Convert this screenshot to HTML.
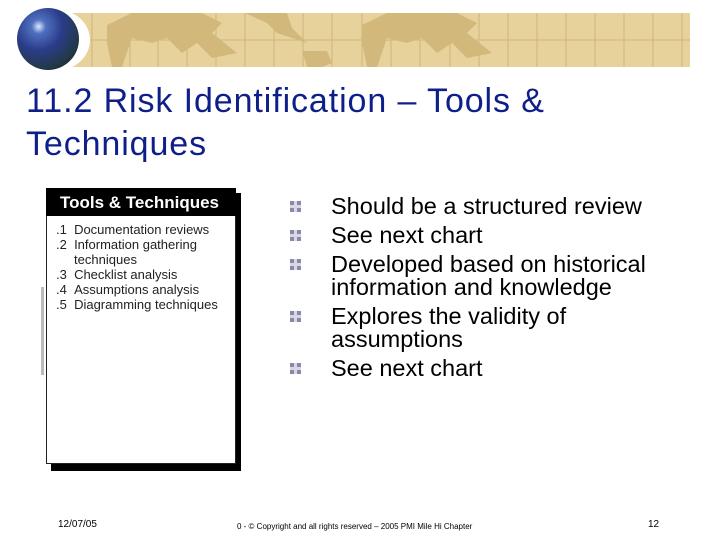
<!DOCTYPE html>
<html><head><style>
body{margin:0;width:720px;height:540px;background:#fff;position:relative;overflow:hidden;font-family:"Liberation Sans",sans-serif}
.a{position:absolute}
.bul{position:absolute;left:331px;font-size:23.5px;color:#000;line-height:23px;white-space:nowrap}
.ic{position:absolute;left:290px;width:11px;height:11px;background:#8a88a8}
.ic:before{content:"";position:absolute;left:4px;top:0;width:3px;height:11px;background:#d8d8e4}
.ic:after{content:"";position:absolute;left:0;top:4px;width:11px;height:3px;background:#d8d8e4}
</style></head><body>
<div class="a" style="left:62px;top:13px;width:628px;height:54px;background:#e6d29a;overflow:hidden">
<svg width="628" height="54">
<g stroke="#cfb77c" stroke-width="1">
<line x1="0" y1="27" x2="628" y2="27"/>
<path d="M30 0V54M68 0V54M96 0V54M125 0V54M154 0V54M183 0V54M212 0V54M241 0V54M270 0V54M300 0V54M329 0V54M358 0V54M388 0V54M417 0V54M446 0V54M475 0V54M504 0V54M533 0V54M562 0V54M591 0V54M620 0V54"/>
</g>
<g fill="#d3b87c">
<path d="M45 12 L70 0 L140 0 L160 10 L150 20 L175 40 L150 45 L135 30 L120 40 L105 25 L90 30 L70 25 L60 54 L50 54 L45 30Z"/>
<path d="M183 0 L225 0 L230 15 L245 30 L230 25 L215 20 L205 10Z"/>
<path d="M240 38 L265 38 L270 50 L260 54 L245 54Z"/>
<path d="M300 12 L325 0 L395 0 L415 10 L405 20 L430 40 L405 45 L390 30 L375 40 L360 25 L345 30 L325 25 L315 54 L305 54 L300 30Z"/>
</g></svg></div>
<div class="a" style="left:20px;top:9px;width:70px;height:62px;border-radius:50%;background:#fff"></div>
<div class="a" style="left:17px;top:8px;width:62px;height:62px;border-radius:50%;background:radial-gradient(circle at 35% 30%,#e0e8ff 0,#5070c0 12%,#2a3c8a 40%,#233a4a 70%,#111 100%)"></div>
<div class="a" style="left:26px;top:80px;font-size:34px;line-height:43px;color:#0f1f8a;letter-spacing:0.9px;white-space:nowrap">11.2 Risk Identification – Tools &amp;<br>Techniques</div>
<div class="a" style="left:41px;top:287px;width:3px;height:88px;background:#bbb"></div>
<div class="a" style="left:51px;top:193px;width:190px;height:278px;background:#000"></div>
<div class="a" style="left:46px;top:188px;width:188px;height:274px;background:#fff;border:1px solid #222"></div>
<div class="a" style="left:46px;top:188px;width:190px;height:28px;background:#000;color:#fff;font-weight:bold;font-size:17px;line-height:30px;padding-left:14px;box-sizing:border-box;white-space:nowrap">Tools &amp; Techniques</div>
<div class="a" style="left:56px;top:222px;font-size:13px;line-height:15px;color:#222;white-space:nowrap">
.1&nbsp;&nbsp;Documentation reviews<br>.2&nbsp;&nbsp;Information gathering<br>&nbsp;&nbsp;&nbsp;&nbsp;&nbsp;techniques<br>.3&nbsp;&nbsp;Checklist analysis<br>.4&nbsp;&nbsp;Assumptions analysis<br>.5&nbsp;&nbsp;Diagramming techniques</div>
<div class="ic" style="top:201px"></div>
<div class="ic" style="top:230px"></div>
<div class="ic" style="top:259px"></div>
<div class="ic" style="top:311px"></div>
<div class="ic" style="top:363px"></div>
<div class="bul" style="top:195px">Should be a structured review</div>
<div class="bul" style="top:224px">See next chart</div>
<div class="bul" style="top:253px">Developed based on historical<br>information and knowledge</div>
<div class="bul" style="top:305px">Explores the validity of<br>assumptions</div>
<div class="bul" style="top:357px">See next chart</div>
<div class="a" style="left:58px;top:519px;font-size:10px">12/07/05</div>
<div class="a" style="left:237px;top:522px;font-size:8px;white-space:nowrap">0 - © Copyright and all rights reserved – 2005 PMI Mile Hi Chapter</div>
<div class="a" style="left:648px;top:519px;font-size:10px">12</div>
</body></html>
